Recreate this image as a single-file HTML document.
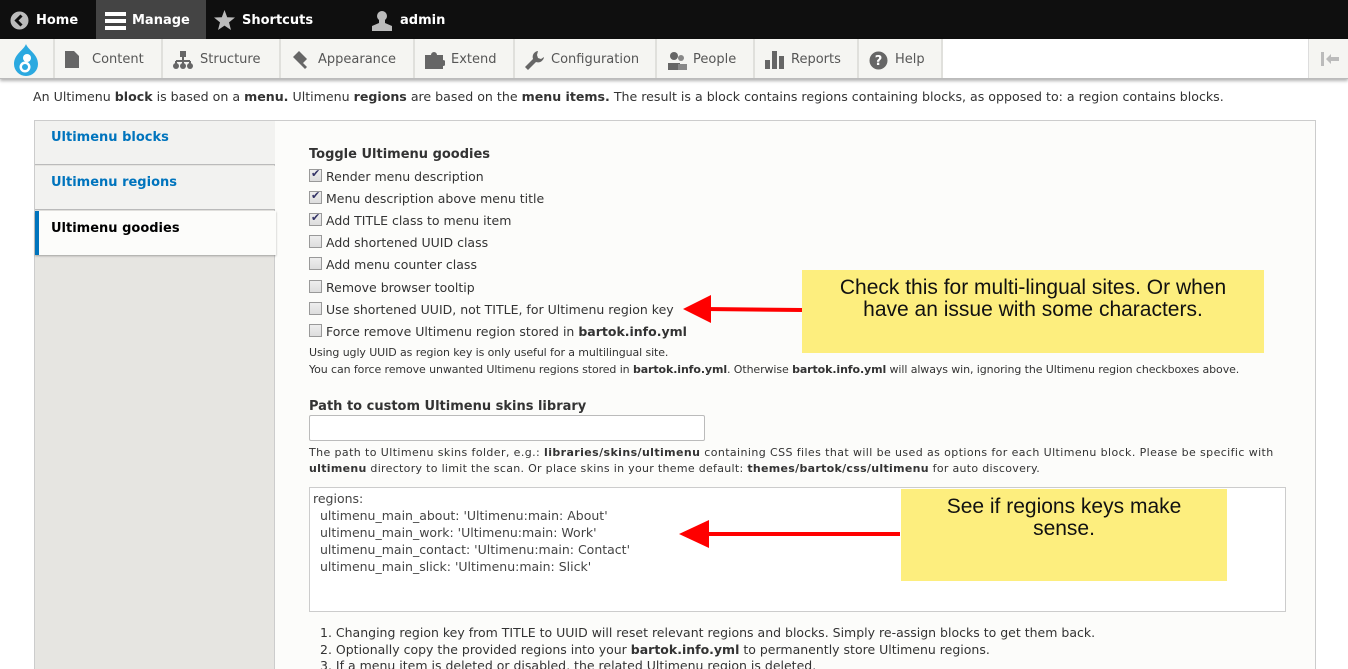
<!DOCTYPE html>
<html><head><meta charset="utf-8"><style>
*{margin:0;padding:0;box-sizing:border-box}
html{width:1348px;height:669px;overflow:hidden}
body{width:1348px;height:669px;overflow:hidden;background:#fff;font-family:"DejaVu Sans","Liberation Sans",sans-serif;font-size:12px;color:#333;position:relative}
.a{position:absolute;white-space:nowrap}
#top{position:absolute;left:0;top:0;width:1348px;height:39px;background:#0f0f0f;color:#fff;font-weight:bold;font-size:13px}
#top .a{top:13px}
#bar{position:absolute;left:0;top:39px;width:1348px;height:40px;background:#fff;border-bottom:1px solid #bbb;box-shadow:0 2px 3px rgba(0,0,0,.3)}
.it{position:absolute;top:0;height:39px;background:#f5f5f2;border-right:2px solid #e0e0dc;color:#565656;font-size:13px;line-height:42px}
.it svg{position:absolute;left:10px;top:12px}
.it span{position:absolute;top:0}
.cb{position:absolute;left:309px;width:13px;height:13px;border:1px solid #999;background:linear-gradient(#eee,#ddd)}
.lb{position:absolute;left:326px;white-space:nowrap;font-size:12.5px;color:#333}
.sm{font-size:11px;letter-spacing:-0.1px}
.note{position:absolute;background:#fdee7e;font-family:"Liberation Sans",sans-serif;font-size:21px;color:#111;text-align:center;line-height:22px}
.ln{position:absolute;left:320px;font-size:12.5px;color:#444;white-space:nowrap}
</style></head><body>
<div id="top">
 <div style="position:absolute;left:96px;top:0;width:110px;height:39px;background:#444"></div>
 <svg class="a" style="left:10px;top:11px" width="19" height="19"><circle cx="9.5" cy="9.5" r="9" fill="#bbb"/><path d="M11.5 4.5L6.5 9.5L11.5 14.5" stroke="#0f0f0f" stroke-width="3" fill="none"/></svg>
 <span class="a" style="left:36px">Home</span>
 <svg class="a" style="left:105px;top:11px" width="21" height="19"><rect y="1" width="21" height="4" fill="#fff"/><rect y="8" width="21" height="4" fill="#fff"/><rect y="15" width="21" height="4" fill="#fff"/></svg>
 <span class="a" style="left:132px">Manage</span>
 <svg class="a" style="left:214px;top:10px" width="21" height="20"><path d="M10.5 0L13.2 7.2L21 7.5L15 12.4L17 20L10.5 15.6L4 20L6 12.4L0 7.5L7.8 7.2Z" fill="#bbb"/></svg>
 <span class="a" style="left:242px">Shortcuts</span>
 <svg class="a" style="left:372px;top:10px" width="20" height="21"><circle cx="10" cy="6" r="5" fill="#bbb"/><path d="M7 10h6v3l7 3v5H0v-5l7-3z" fill="#bbb"/></svg>
 <span class="a" style="left:400px">admin</span>
</div>
<div id="bar">
 <div class="it" style="left:0;width:55px"><svg width="32" height="36" style="left:10px;top:3px" viewBox="0 0 32 36"><path d="M16 2C14 8 4 12 4 22a12 12 0 0 0 24 0C28 12 18 8 16 2z" fill="#2ba9e0"/><circle cx="17" cy="16" r="4" fill="#fff"/><circle cx="15" cy="25" r="5.5" fill="#fff"/><circle cx="15" cy="25" r="3" fill="#2ba9e0"/></svg></div>
 <div class="it" style="left:55px;width:108px"><svg width="14" height="17"><path d="M0 0h9l5 5v12H0z" fill="#666"/></svg><span style="left:37px">Content</span></div>
 <div class="it" style="left:163px;width:118px"><svg width="20" height="18"><rect x="7" y="0" width="6" height="6" fill="#666"/><path d="M10 6v4M3 10h14M3 10v4M10 10v4M17 10v4" stroke="#666" stroke-width="2"/><circle cx="3" cy="15" r="3" fill="#666"/><circle cx="10" cy="15" r="3" fill="#666"/><circle cx="17" cy="15" r="3" fill="#666"/></svg><span style="left:37px">Structure</span></div>
 <div class="it" style="left:281px;width:134px"><svg width="20" height="18"><path d="M2 6L8 0l8 8-6 6z M10 14l4 4 2-2-4-4z" fill="#666"/></svg><span style="left:37px">Appearance</span></div>
 <div class="it" style="left:415px;width:100px"><svg width="20" height="18"><path d="M0 4h6a3 3 0 0 1 6 0h6v5a3 3 0 0 1 0 6v3H0z" fill="#666"/></svg><span style="left:36px">Extend</span></div>
 <div class="it" style="left:515px;width:142px"><svg width="20" height="19"><path d="M13 0a6 6 0 0 0-5 8L0 16l3 3 8-8a6 6 0 0 0 8-5l-3 2-3-1-1-3z" fill="#666"/></svg><span style="left:36px">Configuration</span></div>
 <div class="it" style="left:657px;width:98px"><svg width="20" height="19"><circle cx="7" cy="5" r="4" fill="#666"/><path d="M1 19v-7h12v7z" fill="#666"/><circle cx="14" cy="7" r="3" fill="#888"/><path d="M11 19v-6h9v6z" fill="#888"/></svg><span style="left:36px">People</span></div>
 <div class="it" style="left:755px;width:104px"><svg width="20" height="18"><rect x="0" y="9" width="5" height="9" fill="#666"/><rect x="7" y="0" width="5" height="18" fill="#666"/><rect x="14" y="5" width="5" height="13" fill="#666"/></svg><span style="left:36px">Reports</span></div>
 <div class="it" style="left:859px;width:84px"><svg width="19" height="19"><circle cx="9.5" cy="9.5" r="9" fill="#666"/><text x="9.5" y="14" text-anchor="middle" fill="#fff" font-size="13" font-weight="bold" font-family="DejaVu Sans">?</text></svg><span style="left:36px">Help</span></div>
 <div class="it" style="left:1308px;width:40px;border-right:0;border-left:1px solid #ddd"><svg width="20" height="14" style="left:12px;top:13px"><rect width="3" height="14" fill="#bbb"/><path d="M5 7l5-5v3h8v4h-8v3z" fill="#bbb"/></svg></div>
</div>
<div class="a" style="left:33px;top:89px;font-size:12.6px;color:#333">An Ultimenu <b>block</b> is based on a <b>menu.</b> Ultimenu <b>regions</b> are based on the <b>menu items.</b> The result is a block contains regions containing blocks, as opposed to: a region contains blocks.</div>

<div style="position:absolute;left:34px;top:120px;width:1282px;height:549px;border:1px solid #ccc;border-bottom:0;background:#fcfcfa"></div>
<div style="position:absolute;left:35px;top:121px;width:240px;height:548px;background:#e6e5e1;border-right:1px solid #ccc"></div>
<div style="position:absolute;left:35px;top:121px;width:240px;height:44px;background:#f2f2f0;border-bottom:1px solid #bbb"></div>
<div style="position:absolute;left:35px;top:166px;width:240px;height:44px;background:#f2f2f0;border-bottom:1px solid #bbb"></div>
<div style="position:absolute;left:35px;top:211px;width:241px;height:44px;background:#fcfcfa;border-left:4px solid #0074bd;box-shadow:0 1px 2px rgba(0,0,0,.3)"></div>
<div class="a" style="left:51px;top:130px;font-weight:bold;font-size:13px;color:#0074bd">Ultimenu blocks</div>
<div class="a" style="left:51px;top:175px;font-weight:bold;font-size:13px;color:#0074bd">Ultimenu regions</div>
<div class="a" style="left:51px;top:221px;font-weight:bold;font-size:13px;color:#000">Ultimenu goodies</div>

<div class="a" style="left:309px;top:147px;font-weight:bold;font-size:13px">Toggle Ultimenu goodies</div>
<div class="cb" style="top:169px"><span style="position:absolute;left:1px;top:-3px;font-size:11px;color:#336">✔</span></div><div class="lb" style="top:169px">Render menu description</div>
<div class="cb" style="top:191px"><span style="position:absolute;left:1px;top:-3px;font-size:11px;color:#336">✔</span></div><div class="lb" style="top:191px">Menu description above menu title</div>
<div class="cb" style="top:213px"><span style="position:absolute;left:1px;top:-3px;font-size:11px;color:#336">✔</span></div><div class="lb" style="top:213px">Add TITLE class to menu item</div>
<div class="cb" style="top:235px"></div><div class="lb" style="top:235px">Add shortened UUID class</div>
<div class="cb" style="top:257px"></div><div class="lb" style="top:257px">Add menu counter class</div>
<div class="cb" style="top:280px"></div><div class="lb" style="top:280px">Remove browser tooltip</div>
<div class="cb" style="top:302px"></div><div class="lb" style="top:302px">Use shortened UUID, not TITLE, for Ultimenu region key</div>
<div class="cb" style="top:324px"></div><div class="lb" style="top:324px">Force remove Ultimenu region stored in <b>bartok.info.yml</b></div>
<div class="a sm" style="left:309px;top:346px">Using ugly UUID as region key is only useful for a multilingual site.</div>
<div class="a sm" style="left:309px;top:363px">You can force remove unwanted Ultimenu regions stored in <b>bartok.info.yml</b>. Otherwise <b>bartok.info.yml</b> will always win, ignoring the Ultimenu region checkboxes above.</div>

<div class="a" style="left:309px;top:399px;font-weight:bold;font-size:13px">Path to custom Ultimenu skins library</div>
<div style="position:absolute;left:309px;top:415px;width:396px;height:26px;border:1px solid #bbb;background:#fff;border-radius:2px"></div>
<div class="a sm" style="left:309px;top:446px;letter-spacing:0.4px">The path to Ultimenu skins folder, e.g.: <b>libraries/skins/ultimenu</b> containing CSS files that will be used as options for each Ultimenu block. Please be specific with</div>
<div class="a sm" style="left:309px;top:462px;letter-spacing:0.3px"><b>ultimenu</b> directory to limit the scan. Or place skins in your theme default: <b>themes/bartok/css/ultimenu</b> for auto discovery.</div>

<div style="position:absolute;left:309px;top:487px;width:977px;height:125px;border:1px solid #ccc;background:#fff"></div>
<div class="ln" style="left:313px;top:491px">regions:</div>
<div class="ln" style="top:508px">ultimenu_main_about: 'Ultimenu:main: About'</div>
<div class="ln" style="top:525px">ultimenu_main_work: 'Ultimenu:main: Work'</div>
<div class="ln" style="top:542px">ultimenu_main_contact: 'Ultimenu:main: Contact'</div>
<div class="ln" style="top:559px">ultimenu_main_slick: 'Ultimenu:main: Slick'</div>

<div class="a" style="left:320px;top:625px;font-size:12.5px">1. Changing region key from TITLE to UUID will reset relevant regions and blocks. Simply re-assign blocks to get them back.</div>
<div class="a" style="left:320px;top:642px;font-size:12.5px">2. Optionally copy the provided regions into your <b>bartok.info.yml</b> to permanently store Ultimenu regions.</div>
<div class="a" style="left:320px;top:659px;font-size:12.5px;height:10px;overflow:hidden;line-height:14px">3. If a menu item is deleted or disabled, the related Ultimenu region is deleted.</div>

<div class="note" style="left:802px;top:270px;width:462px;height:83px;padding-top:7px">Check this for multi-lingual sites. Or when<br>have an issue with some characters.</div>
<div class="note" style="left:901px;top:489px;width:326px;height:92px;padding-top:7px">See if regions keys make<br>sense.</div>
<svg style="position:absolute;left:0;top:0" width="1348" height="669">
<path d="M802 310L705 309" stroke="#f00" stroke-width="4"/><path d="M683 309L711 295L711 323Z" fill="#f00"/>
<path d="M900 534L700 534" stroke="#f00" stroke-width="4"/><path d="M679 534L709 520L709 548Z" fill="#f00"/>
</svg>
</body></html>
